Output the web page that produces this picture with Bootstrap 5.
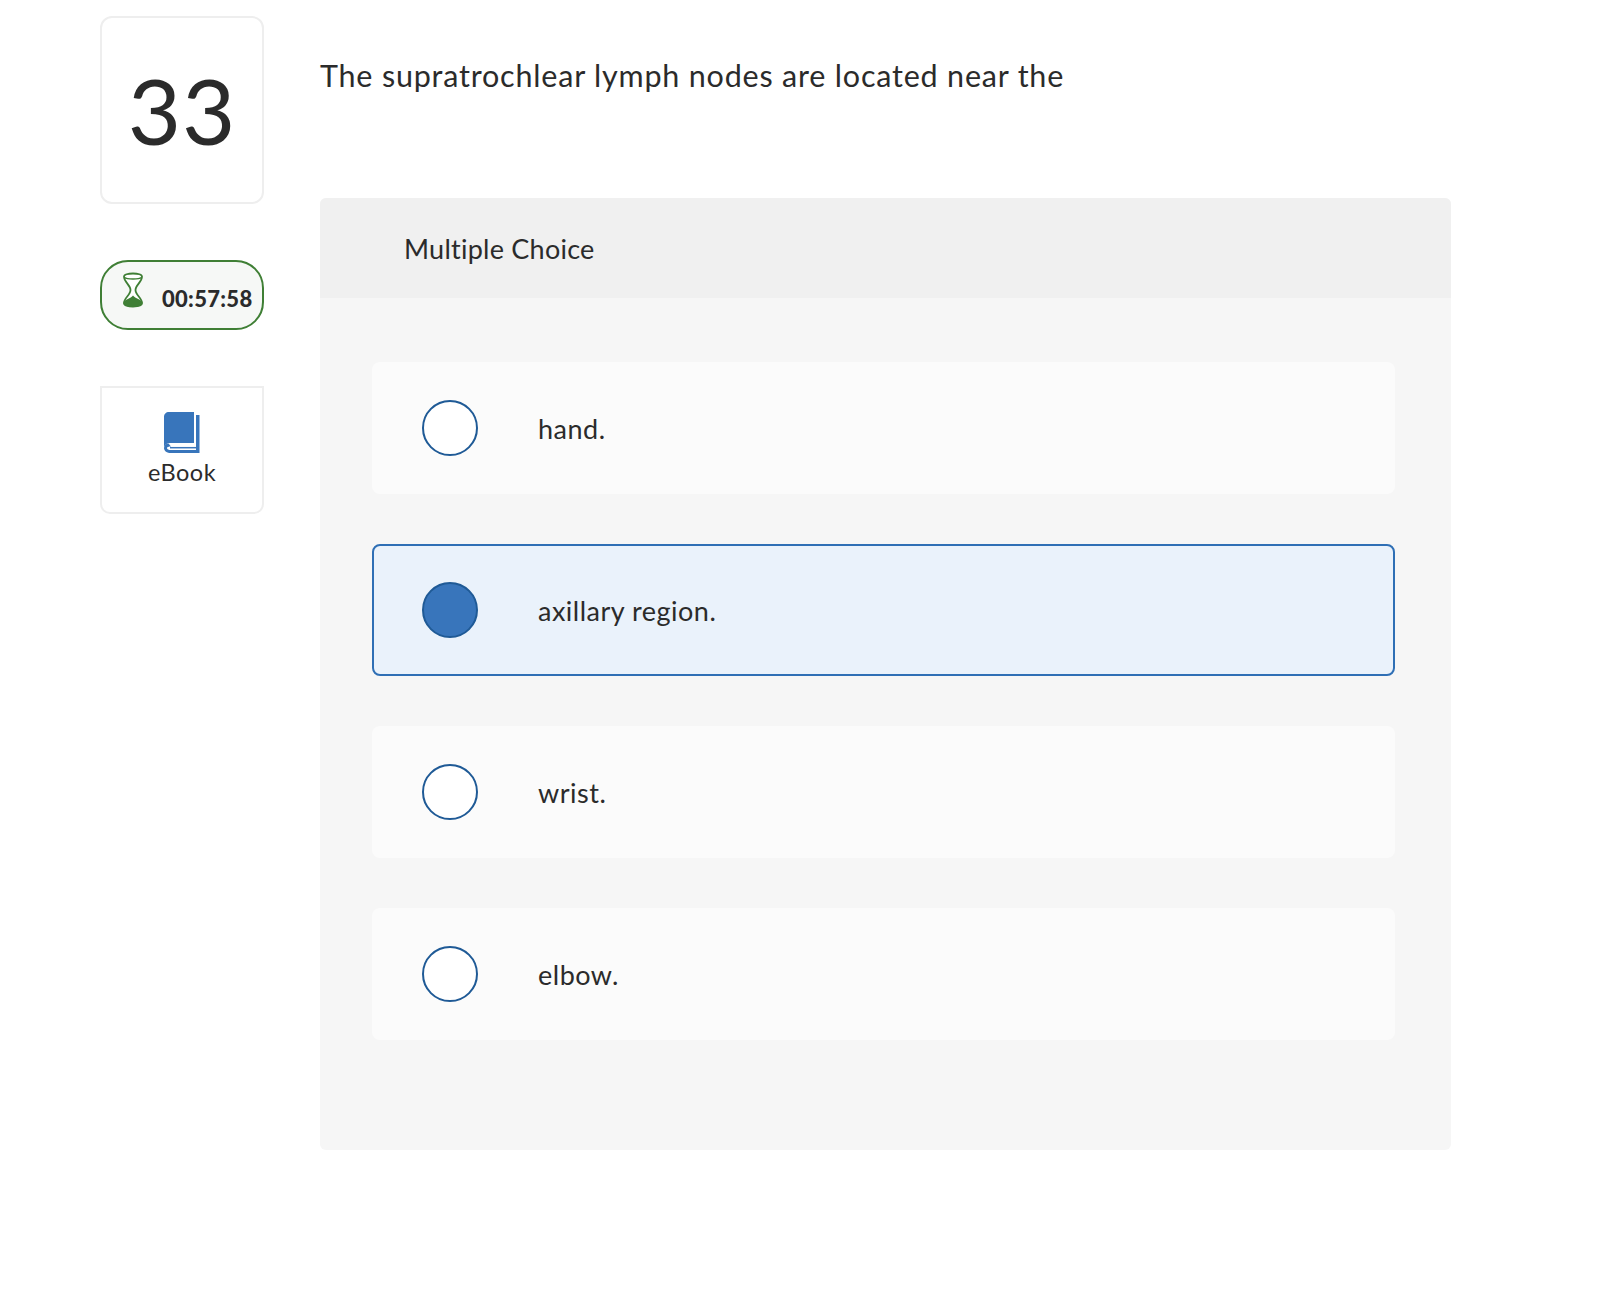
<!DOCTYPE html>
<html lang="en">
<head>
<meta charset="utf-8">
<title>Question 33</title>
<link rel="stylesheet" href="https://cdn.jsdelivr.net/npm/bootstrap@5.3.0/dist/css/bootstrap.min.css">
<style>
body{font-family:"Lato","Liberation Sans",sans-serif;color:#2b2b2b;background:#fff;}
.page-wrap{padding:16px 0 0 100px;gap:56px;}
.side-col{width:164px;}
.main-col{width:1131px;}
.num-box{height:188px;border:2px solid #eee;border-radius:12px;font-size:92px;font-weight:400;line-height:1;letter-spacing:1px;margin-bottom:56px;}
.timer-box{height:70px;background:#f6f8f6;border:2px solid #3f7f35;border-radius:28px;margin-bottom:56px;padding:10px 10px 0 19px;font-weight:900;font-size:22px;}
.timer-text{margin:14px 0 0 17px;line-height:26px;letter-spacing:.3px;white-space:nowrap;}
.ebook-box{height:128px;border:2px solid #eee;border-radius:0 0 10px 10px;font-size:23.5px;padding-top:24px;line-height:30px;letter-spacing:.5px;}
.ebook-box svg{margin-bottom:3px;}
.q-text{font-size:30.5px;line-height:40px;letter-spacing:.8px;padding-top:39px;height:182px;}
.q-panel{height:952px;background:#f6f6f6;border-radius:6px;overflow:hidden;}
.q-head{height:100px;background:#f0f0f0;padding:2px 0 0 84px;font-size:27px;letter-spacing:.25px;}
.q-list{padding:64px 56px 0 52px;gap:50px;}
.q-option{height:132px;background:#fbfbfb;border-radius:8px;padding:2px 0 0 50px;font-size:27px;letter-spacing:.5px;}
.q-option.is-on{background:#eaf2fb;border:2px solid #2f6fb5;padding-left:48px;}
.q-dot{width:56px;height:56px;border:2px solid #1f5a96;border-radius:50%;background:#fff;margin:-2px 60px 0 0;flex:none;}
.is-on .q-dot{background:#3875bb;}
</style>
</head>
<body>
<div class="d-flex page-wrap">
  <div class="side-col flex-shrink-0">
    <div class="num-box d-flex align-items-center justify-content-center">33</div>
    <div class="timer-box d-flex align-items-start">
      <svg class="flex-shrink-0" width="24" height="36" viewBox="0 0 24 36" aria-hidden="true">
        <path d="M3 4.500C3 2.500 7 1.500 12 1.500S21 2.500 21 4.500C21 10 14.500 13 14.500 18S21 26 21 31C21 33.500 17 34.500 12 34.500S3 33.500 3 31C3 26 9.500 23 9.500 18S3 10 3 4.500Z" fill="#fff" stroke="#3f7f35" stroke-width="1.800"/>
        <path d="M3.500 5.500C6 7.500 18 7.500 20.500 5.500" fill="none" stroke="#3f7f35" stroke-width="1.500"/>
        <path d="M2.500 31C3 27.500 9 27 12 23.500C15 27 21 27.500 21.500 31C21.500 33.800 17 35 12 35S2.500 33.800 2.500 31Z" fill="#3f7f35"/>
      </svg>
      <span class="timer-text">00:57:58</span>
    </div>
    <div class="ebook-box text-center">
      <svg class="d-block mx-auto" width="36" height="42" viewBox="0 0 36 42" aria-hidden="true">
        <path d="M5 0H30V31H6C3.500 31 1 32.500 0 35V5C0 2 2 0 5 0Z" fill="#3875bb"/>
        <path d="M32 3H35.500V41H7C3 41 0 39 0 36C0 33.500 2 31.500 4.500 31.500L7 34.500C4.500 34.500 3 35 3 36C3 37.500 4.500 38 7 38H32Z" fill="#3875bb"/>
        <path d="M6 35.700H32" stroke="#3875bb" stroke-width="1.500"/>
      </svg>
      eBook
    </div>
  </div>
  <div class="main-col">
    <div class="q-text">The supratrochlear lymph nodes are located near the</div>
    <div class="q-panel">
      <div class="q-head d-flex align-items-center">Multiple Choice</div>
      <div class="q-list d-flex flex-column">
        <div class="q-option d-flex align-items-center"><span class="q-dot"></span>hand.</div>
        <div class="q-option is-on d-flex align-items-center"><span class="q-dot"></span>axillary region.</div>
        <div class="q-option d-flex align-items-center"><span class="q-dot"></span>wrist.</div>
        <div class="q-option d-flex align-items-center"><span class="q-dot"></span>elbow.</div>
      </div>
    </div>
  </div>
</div>
<script src="https://cdn.jsdelivr.net/npm/bootstrap@5.3.0/dist/js/bootstrap.bundle.min.js"></script>
</body>
</html>
